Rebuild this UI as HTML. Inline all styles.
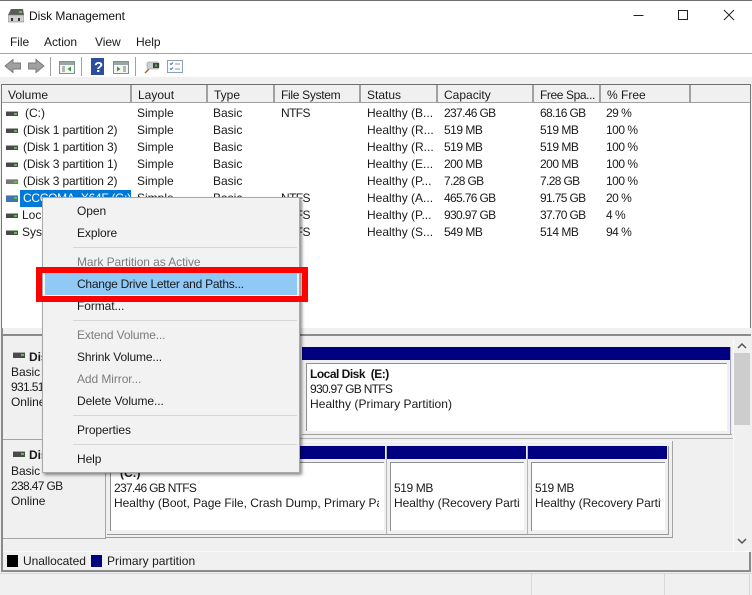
<!DOCTYPE html>
<html><head><meta charset="utf-8"><style>
html,body{margin:0;padding:0}
body{width:752px;height:595px;overflow:hidden;position:relative;background:#f0f0f0;font-family:"Liberation Sans",sans-serif;font-size:12px;color:#1a1a1a}
.a,.t{position:absolute}
.t{white-space:nowrap;line-height:16px;letter-spacing:-.05px}
.r{position:absolute;left:3px;width:729px;height:17px}
.r span{position:absolute;top:0;line-height:17px;white-space:nowrap}
.r .n{letter-spacing:-.65px}
.r .p{letter-spacing:-.5px}
.r .d{letter-spacing:-.15px}
.r .x{letter-spacing:-.6px}
.h{position:absolute;top:85px;height:17px;background:#f0f0f0;border-right:2px solid #a0a0a0;box-sizing:border-box;line-height:20px;padding-left:6px;color:#1a1a1a;white-space:nowrap;overflow:hidden}
.m{position:absolute;left:77px;white-space:nowrap;line-height:16px;color:#1a1a1a;letter-spacing:-.08px}
.g{color:#7d7d7d}
.s{position:absolute;left:73px;width:224px;height:1px;background:#d7d7d7}
.ic{position:absolute;left:3px;width:12px;height:4px;background:#4a4a4a;border-top:1px solid #a8a8a8}
.ic:after{content:"";position:absolute;right:1px;top:1px;width:3px;height:2px;background:#5fbf3f}
.blue{position:absolute;background:#000080;height:13px}
.box{position:absolute;background:#fff}
.in{position:absolute;border-left:1px solid #8f8f8f;border-top:1px solid #8f8f8f}
</style></head><body>
<!-- title -->
<div class="a" style="left:0;top:0;width:752px;height:53px;background:#fff"></div>
<div class="a" style="left:0;top:0;width:752px;height:1px;background:#6e6e6e"></div>
<svg class="a" style="left:8px;top:9px" width="16" height="14" viewBox="0 0 16 14"><path d="M3 0h12l1 6H0z" fill="#5b5b5b"/><path d="M0 6h16v7H0z" fill="#cfcfcf" stroke="#777" stroke-width=".6"/><rect x="11" y="2" width="3" height="2" fill="#62c04a"/><rect x="3" y="9" width="2" height="3" fill="#333"/><rect x="10" y="9" width="2" height="3" fill="#333"/></svg>
<div class="t" style="left:29px;top:8px;color:#111">Disk Management</div>
<svg class="a" style="left:632px;top:8px" width="112" height="16" viewBox="0 0 112 16"><path d="M1.500 7.500h10" stroke="#222" fill="none"/><rect x="46.500" y="2.500" width="9" height="9" stroke="#222" fill="none"/><path d="M92 2l10 10M102 2L92 12" stroke="#222" fill="none"/></svg>
<!-- menu -->
<div class="t" style="left:10px;top:34px">File</div>
<div class="t" style="left:44px;top:34px">Action</div>
<div class="t" style="left:95px;top:34px">View</div>
<div class="t" style="left:136px;top:34px">Help</div>
<div class="a" style="left:0;top:53px;width:752px;height:1px;background:#a5a5a5"></div>
<!-- toolbar -->
<div class="a" style="left:0;top:54px;width:752px;height:23px;background:#fff"></div>
<svg class="a" style="left:0;top:55px" width="200" height="22" viewBox="0 0 200 22">
<path d="M5 11l8-6.500v3.500h7.500v6H13v3.500z" fill="#a0a0a0" stroke="#777" stroke-width=".9"/>
<path d="M44 11l-8-6.500v3.500h-7.500v6H36v3.500z" fill="#a0a0a0" stroke="#777" stroke-width=".9"/>
<path d="M50.500 2v19M81.500 2v19M135.500 2v19" stroke="#a0a0a0"/>
<rect x="59.500" y="6.500" width="15" height="12" fill="#f4f6f4" stroke="#7f8f8f"/><rect x="60" y="7" width="14" height="3" fill="#9aa5a5"/><path d="M71 11.500v5l-3.500-2.500z" fill="#3a9a3a"/><path d="M62 12h3M62 14h3M62 16h3" stroke="#777"/>
<rect x="91" y="3" width="13" height="17" fill="#2b4f9e"/><text x="94" y="17" font-family="Liberation Sans" font-size="15" font-weight="bold" fill="#fff">?</text>
<rect x="113.500" y="6.500" width="15" height="12" fill="#f4f6f4" stroke="#7f8f8f"/><rect x="114" y="7" width="14" height="3" fill="#9aa5a5"/><path d="M117 11.500v5l3.500-2.500z" fill="#3a9a3a"/><path d="M123 12h3M123 14h3M123 16h3" stroke="#777"/>
<path d="M145 18l4-4" stroke="#a06a3a" stroke-width="1.500"/><rect x="147" y="7" width="12" height="7" rx="2" fill="#c8d0d0" stroke="#8a9090" stroke-width=".6"/><rect x="153" y="8" width="6" height="5" fill="#444"/><rect x="155" y="9.500" width="2" height="2" fill="#5fc04a"/>
<rect x="167.500" y="5.500" width="15" height="12" fill="#fbfcfd" stroke="#8ca0b0"/><path d="M170 8.500l1 1 2-2M170 13.500l1 1 2-2" stroke="#3a6fb0" fill="none"/><path d="M175 9h5M175 14h5" stroke="#999"/>
</svg>
<!-- list -->
<div class="a" style="left:1px;top:84px;width:750px;height:244px;background:#fff;border-top:1px solid #6e6e6e;border-left:1px solid #777;border-right:1px solid #777;box-sizing:border-box"></div>
<div class="h" style="left:2px;width:130px">Volume</div>
<div class="h" style="left:132px;width:76px">Layout</div>
<div class="h" style="left:208px;width:67px">Type</div>
<div class="h" style="left:275px;width:86px;letter-spacing:-.3px">File System</div>
<div class="h" style="left:361px;width:77px">Status</div>
<div class="h" style="left:438px;width:96px">Capacity</div>
<div class="h" style="left:534px;width:67px;letter-spacing:-.4px">Free Spa...</div>
<div class="h" style="left:601px;width:90px">% Free</div>
<div class="h" style="left:691px;width:59px;border-right:0"></div>
<div class="a" style="left:2px;top:102px;width:748px;height:1px;background:#a0a0a0"></div>
<div class="r" style="top:105px"><i class="ic" style="top:6px"></i><span style="left:22px">(C:)</span><span style="left:134px">Simple</span><span style="left:210px">Basic</span><span class="x" style="left:278px">NTFS</span><span style="left:364px">Healthy (B...</span><span class="n" style="left:441px">237.46 GB</span><span class="n" style="left:537px">68.16 GB</span><span class="p" style="left:603px">29 %</span></div>
<div class="r" style="top:122px"><i class="ic" style="top:6px"></i><span class="d" style="left:20px">(Disk 1 partition 2)</span><span style="left:134px">Simple</span><span style="left:210px">Basic</span><span style="left:364px">Healthy (R...</span><span class="p" style="left:441px">519 MB</span><span class="p" style="left:537px">519 MB</span><span class="p" style="left:603px">100 %</span></div>
<div class="r" style="top:139px"><i class="ic" style="top:6px"></i><span class="d" style="left:20px">(Disk 1 partition 3)</span><span style="left:134px">Simple</span><span style="left:210px">Basic</span><span style="left:364px">Healthy (R...</span><span class="p" style="left:441px">519 MB</span><span class="p" style="left:537px">519 MB</span><span class="p" style="left:603px">100 %</span></div>
<div class="r" style="top:156px"><i class="ic" style="top:6px"></i><span class="d" style="left:20px">(Disk 3 partition 1)</span><span style="left:134px">Simple</span><span style="left:210px">Basic</span><span style="left:364px">Healthy (E...</span><span class="p" style="left:441px">200 MB</span><span class="p" style="left:537px">200 MB</span><span class="p" style="left:603px">100 %</span></div>
<div class="r" style="top:173px"><i class="ic" style="top:6px;background:#777"></i><span class="d" style="left:20px">(Disk 3 partition 2)</span><span style="left:134px">Simple</span><span style="left:210px">Basic</span><span style="left:364px">Healthy (P...</span><span class="n" style="left:441px">7.28 GB</span><span class="n" style="left:537px">7.28 GB</span><span class="p" style="left:603px">100 %</span></div>
<div class="r" style="top:190px"><i class="ic" style="top:5px;height:6px;background:#3f74b5"></i><span style="left:17px;width:111px;height:17px;background:#0078d7;color:#fff;padding-left:3px;box-sizing:border-box;overflow:hidden;letter-spacing:-.3px">CCCOMA_X64F (G:)</span><span style="left:134px">Simple</span><span style="left:210px">Basic</span><span class="x" style="left:278px">NTFS</span><span style="left:364px">Healthy (A...</span><span class="n" style="left:441px">465.76 GB</span><span class="n" style="left:537px">91.75 GB</span><span class="p" style="left:603px">20 %</span></div>
<div class="r" style="top:207px"><i class="ic" style="top:6px"></i><span style="left:19px">Local Disk (E:)</span><span class="x" style="left:278px">NTFS</span><span style="left:364px">Healthy (P...</span><span class="n" style="left:441px">930.97 GB</span><span class="n" style="left:537px">37.70 GB</span><span class="p" style="left:603px">4 %</span></div>
<div class="r" style="top:224px"><i class="ic" style="top:6px"></i><span style="left:19px">System</span><span class="x" style="left:278px">NTFS</span><span style="left:364px">Healthy (S...</span><span class="p" style="left:441px">549 MB</span><span class="p" style="left:537px">514 MB</span><span class="p" style="left:603px">94 %</span></div>
<div class="a" style="left:0;top:328px;width:752px;height:10px;background:#f0f0f0"></div>
<div class="a" style="left:2px;top:334px;width:749px;height:2px;background:#8a8a8a"></div>
<div class="a" style="left:1px;top:328px;width:2px;height:243px;background:#8a8a8a"></div>
<!-- disk pane -->
<div class="a" style="left:3px;top:439px;width:102px;height:1px;background:#a5a5a5"></div>
<div class="a" style="left:105px;top:438px;width:628px;height:1px;background:#b5b5b5"></div>
<div class="a" style="left:3px;top:538px;width:103px;height:1px;background:#a5a5a5"></div>
<div class="a" style="left:105px;top:537px;width:568px;height:1px;background:#9a9a9a"></div>
<div class="a" style="left:13px;top:352px;width:12px;height:5px;background:#4a4a4a;border-top:1px solid #aaa"></div>
<div class="a" style="left:21px;top:354px;width:3px;height:2px;background:#5fbf3f"></div>
<div class="t" style="left:29px;top:349px;font-weight:bold">Disk 1</div>
<div class="t" style="left:11px;top:364px">Basic</div>
<div class="t" style="left:11px;top:379px;letter-spacing:-.65px">931.51 GB</div>
<div class="t" style="left:11px;top:394px">Online</div>
<div class="a" style="left:13px;top:451px;width:12px;height:5px;background:#4a4a4a;border-top:1px solid #aaa"></div>
<div class="a" style="left:21px;top:453px;width:3px;height:2px;background:#5fbf3f"></div>
<div class="t" style="left:29px;top:447px;font-weight:bold">Disk 2</div>
<div class="t" style="left:11px;top:463px">Basic</div>
<div class="t" style="left:11px;top:478px;letter-spacing:-.65px">238.47 GB</div>
<div class="t" style="left:11px;top:493px">Online</div>
<div class="a" style="left:105px;top:439px;width:1px;height:98px;background:#a5a5a5"></div>
<div class="a" style="left:672px;top:441px;width:1px;height:96px;background:#a5a5a5"></div>
<div class="a" style="left:106px;top:441px;width:566px;height:1px;background:#fafafa"></div>
<!-- upper partition -->
<div class="blue" style="left:302px;top:347px;width:428px"></div>
<div class="box" style="left:307px;top:364px;width:420px;height:67px"></div>
<div class="a" style="left:302px;top:434px;width:430px;height:1px;background:#a0a0a0"></div>
<div class="a" style="left:730px;top:347px;width:1px;height:87px;background:#a5a5c8"></div>
<div class="in" style="left:306px;top:363px;width:420px;height:67px"></div>
<div class="t" style="left:310px;top:366px;font-weight:bold;color:#111;letter-spacing:-.5px">Local Disk&nbsp; (E:)</div>
<div class="t" style="left:310px;top:381px;letter-spacing:-.7px">930.97 GB NTFS</div>
<div class="t" style="left:310px;top:396px;letter-spacing:.05px">Healthy (Primary Partition)</div>
<!-- lower partitions -->
<div class="blue" style="left:108px;top:446px;width:277px"></div>
<div class="box" style="left:111px;top:463px;width:273px;height:67px"></div>
<div class="in" style="left:110px;top:462px;width:273px;height:68px"></div>
<div class="t" style="left:120px;top:465px;font-weight:bold">(C:)</div>
<div class="t" style="left:114px;top:480px;letter-spacing:-.7px">237.46 GB NTFS</div>
<div class="t" style="left:114px;top:495px;width:265px;overflow:hidden;letter-spacing:-.02px">Healthy (Boot, Page File, Crash Dump, Primary Partition)</div>
<div class="blue" style="left:387px;top:446px;width:139px"></div>
<div class="box" style="left:391px;top:463px;width:133px;height:67px"></div>
<div class="in" style="left:390px;top:462px;width:133px;height:68px"></div>
<div class="t" style="left:394px;top:480px;letter-spacing:-.4px">519 MB</div>
<div class="t" style="left:394px;top:495px;width:126px;overflow:hidden">Healthy (Recovery Partition)</div>
<div class="blue" style="left:528px;top:446px;width:139px"></div>
<div class="box" style="left:532px;top:463px;width:133px;height:67px"></div>
<div class="in" style="left:531px;top:462px;width:133px;height:68px"></div>
<div class="t" style="left:535px;top:480px;letter-spacing:-.4px">519 MB</div>
<div class="t" style="left:535px;top:495px;width:126px;overflow:hidden">Healthy (Recovery Partition)</div>
<div class="a" style="left:668px;top:446px;width:1px;height:89px;background:#999"></div>
<div class="a" style="left:386px;top:446px;width:1px;height:89px;background:#b5b5b5"></div>
<div class="a" style="left:527px;top:446px;width:1px;height:89px;background:#b5b5c5"></div>
<div class="a" style="left:107px;top:534px;width:562px;height:1px;background:#999"></div>
<!-- scrollbar -->
<div class="a" style="left:733px;top:338px;width:18px;height:213px;background:#f0f0f0;border-left:1px solid #fafafa;box-sizing:border-box"></div>
<div class="a" style="left:734px;top:353px;width:16px;height:72px;background:#cdcdcd"></div>
<svg class="a" style="left:733px;top:338px" width="18" height="212" viewBox="0 0 18 212"><path d="M5 10l4-4 4 4M5 201l4 4 4-4" stroke="#555" stroke-width="1.500" fill="none"/></svg>
<!-- legend -->
<div class="a" style="left:3px;top:551px;width:747px;height:1px;background:#fafafa"></div>
<div class="a" style="left:7px;top:555px;width:11px;height:12px;background:#000"></div>
<div class="t" style="left:23px;top:553px">Unallocated</div>
<div class="a" style="left:91px;top:555px;width:11px;height:12px;background:#000080"></div>
<div class="t" style="left:107px;top:553px;letter-spacing:.05px">Primary partition</div>
<div class="a" style="left:1px;top:570px;width:750px;height:2px;background:#8a8a8a"></div>
<div class="a" style="left:749px;top:552px;width:2px;height:19px;background:#8a8a8a"></div>
<!-- status -->
<div class="a" style="left:0;top:573px;width:752px;height:1px;background:#d8d8d8"></div>
<div class="a" style="left:531px;top:574px;width:1px;height:21px;background:#d8d8d8"></div>
<div class="a" style="left:664px;top:574px;width:1px;height:21px;background:#d8d8d8"></div>
<div class="a" style="left:749px;top:574px;width:1px;height:21px;background:#d8d8d8"></div>
<!-- context menu -->
<div class="a" style="left:42px;top:197px;width:258px;height:276px;background:#f2f2f2;border:1px solid #a8a8a8;box-sizing:border-box;box-shadow:2px 2px 3px rgba(0,0,0,.45)"></div>
<div class="m" style="top:203px">Open</div>
<div class="m" style="top:225px">Explore</div>
<div class="s" style="top:247px"></div>
<div class="m g" style="top:254px">Mark Partition as Active</div>
<div class="a" style="left:45px;top:273px;width:252px;height:22px;background:#90c8f6"></div>
<div class="m" style="top:276px;letter-spacing:-.25px">Change Drive Letter and Paths...</div>
<div class="m" style="top:298px">Format...</div>
<div class="s" style="top:320px"></div>
<div class="m g" style="top:327px;letter-spacing:-.15px">Extend Volume...</div>
<div class="m" style="top:349px;letter-spacing:-.15px">Shrink Volume...</div>
<div class="m g" style="top:371px">Add Mirror...</div>
<div class="m" style="top:393px">Delete Volume...</div>
<div class="s" style="top:415px"></div>
<div class="m" style="top:422px">Properties</div>
<div class="s" style="top:444px"></div>
<div class="m" style="top:451px">Help</div>
<!-- red highlight -->
<div class="a" style="left:36px;top:267px;width:272px;height:35px;border:6px solid #f00;box-sizing:border-box"></div>
</body></html>
